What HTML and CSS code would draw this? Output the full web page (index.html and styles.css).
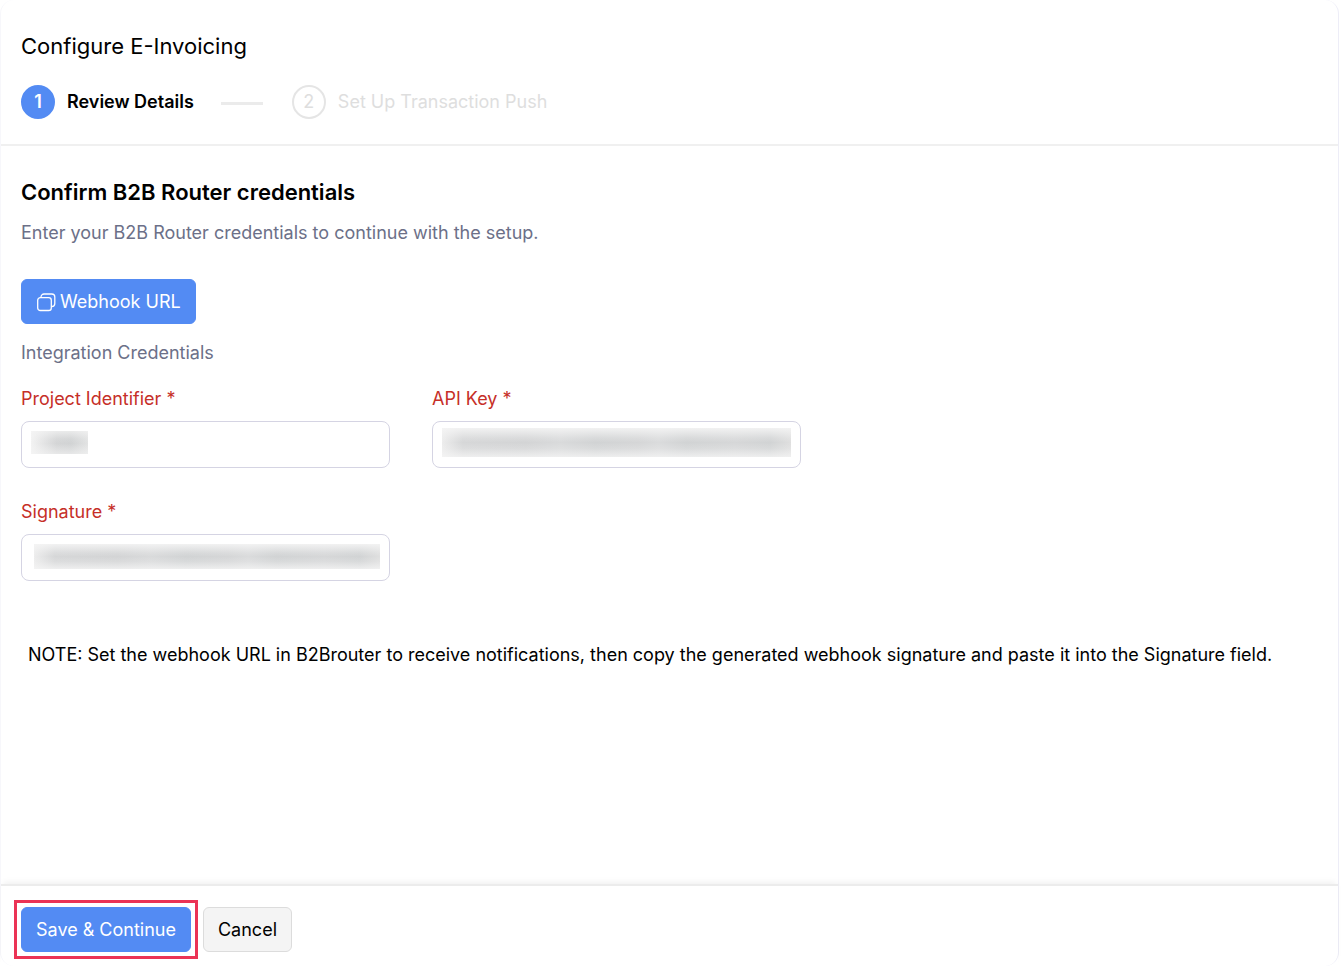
FILE: index.html
```html
<!DOCTYPE html>
<html lang="en">
<head>
    <meta charset="UTF-8">
    <meta name="viewport" content="width=device-width, initial-scale=1.0">
    <title>Configure E-Invoicing</title>
    <link rel="stylesheet" href="styles.css">
</head>
<body>
    <form class="panel">
        <header class="panel-header">
            <h1>Configure E-Invoicing</h1>
            <ol class="steps">
                <li class="step active">
                    <span class="step-number">1</span>
                    <span class="step-label">Review Details</span>
                </li>
                <li class="step">
                    <span class="step-number">2</span>
                    <span class="step-label">Set Up Transaction Push</span>
                </li>
            </ol>
        </header>

        <main class="content">
            <h2>Confirm B2B Router credentials</h2>
            <p class="description">Enter your B2B Router credentials to continue with the setup.</p>

            <button type="button" class="btn btn-primary">
                <svg class="icon" viewBox="0 0 20 20" fill="none" stroke="currentColor" stroke-width="1.3" aria-hidden="true">
                    <rect x="1.7" y="5.7" width="13.6" height="12.8" rx="2.6"/>
                    <path d="M5 5.6V5a3 3 0 0 1 3-3h7.800a3 3 0 0 1 3 3v6.600a3 3 0 0 1-3 3h-.4"/>
                </svg>
                Webhook URL
            </button>

            <h3>Integration Credentials</h3>
            <div class="fields">
                <div class="field">
                    <label for="projectId">Project Identifier *</label>
                    <input type="text" id="projectId" class="masked masked-short" required>
                </div>
                <div class="field">
                    <label for="apiKey">API Key *</label>
                    <input type="text" id="apiKey" class="masked masked-key" required>
                </div>
                <div class="field">
                    <label for="signature">Signature *</label>
                    <input type="text" id="signature" class="masked masked-signature" required>
                </div>
            </div>

            <p class="note">NOTE: Set the webhook URL in B2Brouter to receive notifications, then copy the generated webhook signature and paste it into the Signature field.</p>
        </main>

        <footer class="panel-footer">
            <div class="highlight">
                <button type="submit" class="btn btn-primary">Save &amp; Continue</button>
            </div>
            <button type="button" class="btn btn-default">Cancel</button>
        </footer>
    </form>
</body>
</html>
```

FILE: styles.css
```css
* {
    box-sizing: border-box;
}
body {
    margin: 0;
    background: #fff;
    color: #000;
    font-family: Inter, "Liberation Sans", sans-serif;
    font-size: 18px;
    line-height: 24px;
}
h1, h2, h3, p, ol {
    margin: 0;
    padding: 0;
}
.panel {
    display: flex;
    flex-direction: column;
    min-height: 100vh;
    margin-right: 5px;
    border: 1px solid #ededf7;
    border-width: 0 1px;
    border-left-color: #f7f7fb;
    border-radius: 14px;
}

/* Header and stepper */
.panel-header {
    padding: 30px 20px 25px;
    border-bottom: 2px solid #f0f0f0;
}
.panel-header h1 {
    margin-bottom: 23px;
    font-size: 22px;
    font-weight: 400;
    line-height: 32px;
}
.steps {
    display: flex;
    list-style: none;
}
.step {
    display: flex;
    align-items: center;
    color: #dedede;
}
.step + .step::before {
    content: "";
    width: 42px;
    height: 3px;
    margin: 2px 29px 0 27px;
    background: #ebebeb;
}
.step-number {
    display: flex;
    align-items: center;
    justify-content: center;
    width: 34px;
    height: 34px;
    margin-right: 12px;
    border: 2px solid #e5e5e5;
    border-radius: 50%;
}
.step.active {
    color: #000;
    font-weight: 600;
}
.step.active .step-number {
    background: #538bf3;
    border-color: #538bf3;
    color: #fff;
}

/* Credentials */
.content {
    flex: 1;
    padding: 30px 20px;
}
.content h2 {
    margin-bottom: 13px;
    font-size: 22px;
    font-weight: 600;
    line-height: 32px;
}
.description {
    margin-bottom: 34px;
    color: #6c7088;
}
.content h3 {
    margin: 17px 0 22px;
    color: #6c7088;
    font-size: 18px;
    font-weight: 400;
}
.fields {
    display: grid;
    grid-template-columns: repeat(2, minmax(0, 369px));
    gap: 32px 42px;
}
.field label {
    display: block;
    margin-bottom: 10px;
    color: #c62f28;
}
.field input {
    display: block;
    width: 100%;
    height: 47px;
    padding: 0 12px;
    border: 1px solid #d5d4e3;
    border-radius: 8px;
    font: inherit;
}
.note {
    margin: 62px 7px 0;
}

/* Hidden values: grey smears that fade out towards the edges */
.masked {
    background-color: #fff;
    background-image:
        linear-gradient(rgba(245, 245, 245, 0.9), rgba(245, 245, 245, 0.2) 35%, rgba(245, 245, 245, 0) 50%, rgba(245, 245, 245, 0.2) 70%, rgba(245, 245, 245, 0.8)),
        linear-gradient(90deg, #ededed, #d6d7d8 6%, #d3d4d5 24%, #d9dadb 34%, #d1d3d4 44%, #d5d6d7 56%, #dadbdc 62%, #d1d3d4 70%, #d6d7d8 84%, #d1d3d4 94%, #dfdfdf);
    background-repeat: no-repeat;
}
.masked-short {
    background-image:
        linear-gradient(rgba(245, 245, 245, 0.7), rgba(245, 245, 245, 0.1) 35%, rgba(245, 245, 245, 0) 55%, rgba(245, 245, 245, 0.6)),
        linear-gradient(90deg, #f3f3f3, #d4d5d6 45%, #d1d3d4 70%, #e2e3e3);
    background-position: 9px 9px;
    background-size: 57px 23px;
}
.masked-key {
    background-position: 9px 6px;
    background-size: calc(100% - 18px) 29px;
}
.masked-signature {
    background-position: 12px 9px;
    background-size: calc(100% - 21px) 25px;
}

/* Buttons */
.btn {
    display: inline-flex;
    align-items: center;
    height: 45px;
    padding: 0 14px;
    border: 1px solid transparent;
    border-radius: 6px;
    font: inherit;
    cursor: pointer;
}
.btn-primary {
    background: #538bf3;
    border-color: #538bf3;
    color: #fff;
}
.btn-default {
    background: #f4f4f4;
    border-color: #dcdcdc;
    color: #000;
}
.icon {
    width: 20px;
    height: 20px;
    margin-right: 4px;
}

/* Footer */
.panel-footer {
    display: flex;
    align-items: center;
    padding: 14px 13px 7px;
    border-top: 2px solid #ececec;
    box-shadow: 0 -4px 6px -2px rgba(0, 0, 0, 0.06);
}
.highlight {
    display: flex;
    margin-right: 5px;
    padding: 4px;
    border: 3px solid #eb3355;
}
```
